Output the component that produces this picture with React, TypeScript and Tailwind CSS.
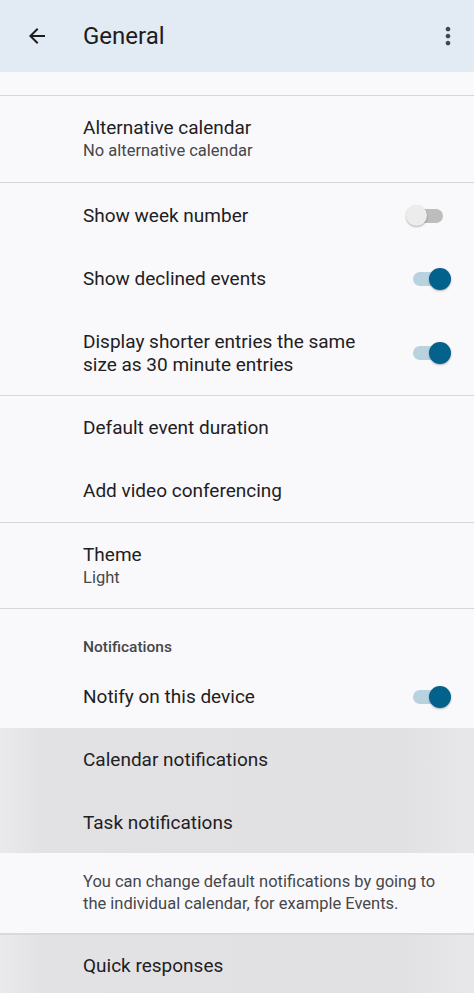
import React from 'react';

const Toggle = ({ on }: { on: boolean }) => (
  <div className="relative w-[46px] h-[24px] shrink-0">
    <div
      className={`absolute left-[8px] right-[8px] top-[5px] h-[14px] rounded-full ${
        on ? 'bg-[#b8d2df]' : 'bg-[#bdbdbd]'
      }`}
    />
    {on ? (
      <div className="absolute right-0 top-[1px] w-[22px] h-[22px] rounded-full bg-[#03628b] shadow-[0_1px_2px_rgba(0,0,0,0.3)]" />
    ) : (
      <div className="absolute left-[1px] top-[1px] w-[21px] h-[21px] rounded-full bg-[#ececec] shadow-[0_1px_2px_rgba(0,0,0,0.3)]" />
    )}
  </div>
);

const Row = ({
  title,
  sub,
  toggle,
  h = 'h-[63px]',
}: {
  title: React.ReactNode;
  sub?: string;
  toggle?: boolean;
  h?: string;
}) => (
  <div className={`flex items-center ${h} pl-[83px] pr-[23px]`}>
    <div className="flex-1 min-w-0">
      <div className="text-[19px] leading-[23px] text-[#1f2022]">{title}</div>
      {sub && <div className="text-[16.5px] leading-[22px] text-[#46474a] mt-[1px]">{sub}</div>}
    </div>
    {toggle !== undefined && <Toggle on={toggle} />}
  </div>
);

const Divider = () => <div className="h-px bg-[#d6d7d9]" />;

const grayBg =
  'bg-[linear-gradient(90deg,#eaeaec_0%,#e2e2e5_9%,#e1e1e4_85%,#e8e8ea_100%)]';

export default function App() {
  return (
    <div
      className="w-[474px] h-[993px] overflow-hidden bg-[#f9f9fc]"
      style={{ fontFamily: 'Roboto, "Noto Sans", sans-serif' }}
    >
      {/* Top bar */}
      <header className="h-[72px] bg-[#e2eaf3] flex items-center pl-[25px] pr-[12px]">
        <svg width="24" height="24" viewBox="0 0 24 24" fill="#1b1c1e">
          <path d="M20 11H7.83l5.59-5.59L12 4l-8 8 8 8 1.41-1.41L7.83 13H20v-2z" />
        </svg>
        <span className="ml-[34px] text-[24px] text-[#1b1c1e] flex-1">General</span>
        <svg width="28" height="28" viewBox="0 0 24 24" fill="#44474a">
          <path d="M12 8c1.1 0 2-.9 2-2s-.9-2-2-2-2 .9-2 2 .9 2 2 2zm0 2c-1.1 0-2 .9-2 2s.9 2 2 2 2-.9 2-2-.9-2-2-2zm0 6c-1.1 0-2 .9-2 2s.9 2 2 2 2-.9 2-2-.9-2-2-2z" />
        </svg>
      </header>

      {/* cut-off row */}
      <div className="h-[23px]" />
      <Divider />

      <Row title="Alternative calendar" sub="No alternative calendar" h="h-[86px]" />
      <Divider />

      <div className="pt-[1px]">
        <Row title="Show week number" toggle={false} h="h-[63px]" />
        <Row title="Show declined events" toggle={true} />
        <Row
          title={
            <>
              Display shorter entries the same
              <br />
              size as 30 minute entries
            </>
          }
          toggle={true}
          h="h-[85px]"
        />
      </div>
      <Divider />

      <Row title="Default event duration" h="h-[63px]" />
      <Row title="Add video conferencing" h="h-[63px]" />
      <Divider />

      <Row title="Theme" sub="Light" h="h-[85px]" />
      <Divider />

      <div className="h-[56px] flex items-end pl-[83px] pb-[6px]">
        <span className="text-[15.5px] font-medium text-[#46474a]">Notifications</span>
      </div>
      <Row title="Notify on this device" toggle={true} />
      <div className={grayBg}>
        <Row title="Calendar notifications" />
        <Row title="Task notifications" h="h-[62px]" />
      </div>
      <div className="h-[80px] flex items-center pl-[83px] pr-[28px]">
        <p className="text-[16.5px] leading-[22px] text-[#46474a]">
          You can change default notifications by going to the individual calendar, for example Events.
        </p>
      </div>
      <div className="h-[2px] bg-[#d9d9dc]" />
      <div className={grayBg}>
        <Row title="Quick responses" h="h-[60px]" />
      </div>
    </div>
  );
}
